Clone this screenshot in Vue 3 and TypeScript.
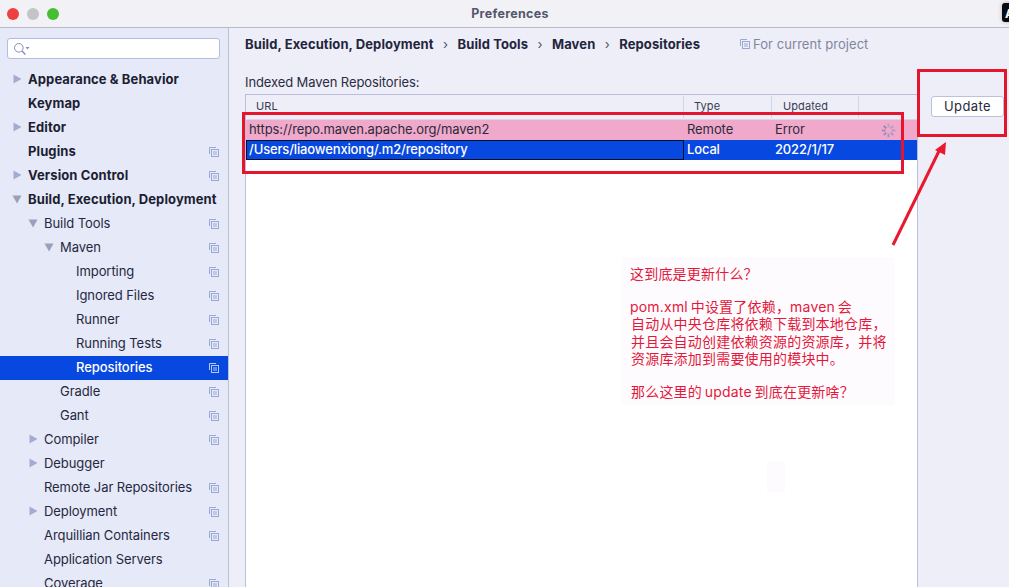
<script setup lang="ts">
interface TreeRow {
  label: string
  level: number
  bold?: boolean
  arrow?: 'right' | 'down'
  copy?: boolean
  active?: boolean
}

const rows: TreeRow[] = [
  { label: 'Appearance & Behavior', level: 0, bold: true, arrow: 'right' },
  { label: 'Keymap', level: 0, bold: true },
  { label: 'Editor', level: 0, bold: true, arrow: 'right' },
  { label: 'Plugins', level: 0, bold: true, copy: true },
  { label: 'Version Control', level: 0, bold: true, arrow: 'right', copy: true },
  { label: 'Build, Execution, Deployment', level: 0, bold: true, arrow: 'down' },
  { label: 'Build Tools', level: 1, arrow: 'down', copy: true },
  { label: 'Maven', level: 2, arrow: 'down', copy: true },
  { label: 'Importing', level: 3, copy: true },
  { label: 'Ignored Files', level: 3, copy: true },
  { label: 'Runner', level: 3, copy: true },
  { label: 'Running Tests', level: 3, copy: true },
  { label: 'Repositories', level: 3, copy: true, active: true },
  { label: 'Gradle', level: 2, copy: true },
  { label: 'Gant', level: 2, copy: true },
  { label: 'Compiler', level: 1, arrow: 'right', copy: true },
  { label: 'Debugger', level: 1, arrow: 'right' },
  { label: 'Remote Jar Repositories', level: 1, copy: true },
  { label: 'Deployment', level: 1, arrow: 'right', copy: true },
  { label: 'Arquillian Containers', level: 1, copy: true },
  { label: 'Application Servers', level: 1 },
  { label: 'Coverage', level: 1, copy: true },
]

const crumbs = ['Build, Execution, Deployment', 'Build Tools', 'Maven', 'Repositories']
const spokes = [0, 45, 90, 135, 180, 225, 270, 315]
const indent = (level: number) => `${28 + level * 16}px`
</script>

<template>
  <div class="window">
    <header class="titlebar">
      <div class="lights">
        <span class="light red"></span>
        <span class="light gray"></span>
        <span class="light green"></span>
      </div>
      <span class="title">Preferences</span>
      <span class="corner-mark">A</span>
    </header>

    <div class="body">
      <aside class="sidebar">
        <div class="search">
          <svg width="17" height="14" viewBox="0 0 17 14" fill="none">
            <circle cx="5.8" cy="5.8" r="4.3" stroke="#7f8fbf" stroke-width="1" />
            <path d="M9 9l3.4 3.6" stroke="#7f8fbf" stroke-width="1.4" />
            <path d="M12.5 5h4l-2 2.4z" fill="#7f8fbf" />
          </svg>
        </div>
        <ul class="tree">
          <li
            v-for="row in rows"
            :key="row.label"
            class="row"
            :class="{ bold: row.bold, active: row.active }"
            :style="{ paddingLeft: indent(row.level) }"
          >
            <svg
              v-if="row.arrow"
              class="arrow"
              :style="{ left: `${12 + row.level * 16}px` }"
              width="10"
              height="10"
              viewBox="0 0 10 10"
            >
              <path v-if="row.arrow === 'right'" d="M1.5 0.5L9.5 5L1.5 9.5z" fill="#a3acd0" />
              <path v-else d="M0.5 1.5H9.5L5 9.5z" fill="#9a9fbc" />
            </svg>
            <span class="label">{{ row.label }}</span>
            <svg v-if="row.copy" class="copy" width="10" height="10" viewBox="0 0 10 10" fill="none">
              <path d="M7 .5H.5V7" stroke="currentColor" />
              <rect x="2.5" y="2.5" width="7" height="7" stroke="currentColor" />
              <path d="M4 5h4M4 7h4" stroke="currentColor" />
            </svg>
          </li>
        </ul>
      </aside>

      <main class="content">
        <nav class="crumbs">
          <template v-for="(c, i) in crumbs" :key="c">
            <span v-if="i" class="sep">›</span>
            <span class="crumb">{{ c }}</span>
          </template>
          <span class="scope">
            <svg width="10" height="10" viewBox="0 0 10 10" fill="none">
              <path d="M7 .5H.5V7" stroke="#9aa8d0" />
              <rect x="2.5" y="2.5" width="7" height="7" stroke="#9aa8d0" />
              <path d="M4 5h4M4 7h4" stroke="#9aa8d0" />
            </svg>
            For current project
          </span>
        </nav>

        <div class="panel-label">Indexed Maven Repositories:</div>
        <div class="panel">
          <section class="table">
            <div class="thead">
              <span class="th url">URL</span>
              <span class="th type">Type</span>
              <span class="th upd">Updated</span>
              <span class="th end"></span>
            </div>
            <div class="tr error">
              <span class="td url">https://repo.maven.apache.org/maven2</span>
              <span class="td type">Remote</span>
              <span class="td upd">Error</span>
              <span class="td end">
                <svg width="15" height="15" viewBox="0 0 15 15">
                  <line
                    v-for="(s, i) in spokes"
                    :key="s"
                    x1="7.5"
                    y1="0.8"
                    x2="7.5"
                    y2="4.4"
                    stroke="#8089bf"
                    stroke-width="1.8"
                    :opacity="0.4 + i * 0.08"
                    :transform="`rotate(${s} 7.5 7.5)`"
                  />
                </svg>
              </span>
            </div>
            <div class="tr selected">
              <span class="td url focus">/Users/liaowenxiong/.m2/repository</span>
              <span class="td type">Local</span>
              <span class="td upd">2022/1/17</span>
              <span class="td end"></span>
            </div>
          </section>
          <div class="actions">
            <button class="btn" type="button">Update</button>
          </div>
        </div>
      </main>
    </div>

    <div class="mark mark-rows"></div>
    <div class="mark mark-btn"></div>
    <svg class="pointer" width="70" height="115" viewBox="0 0 70 115">
      <path d="M3 111L50 15" stroke="#e8182f" stroke-width="3" fill="none" />
      <path d="M56 8L45 16L55 21z" fill="#e8182f" />
    </svg>
    <div class="note">
      <p class="n1">这到底是更新什么？</p>
      <p class="n2">pom.xml&#8201;中设置了依赖，maven&#8201;会</p>
      <p class="n3">自动从中央仓库将依赖下载到本地仓库，</p>
      <p class="n3">并且会自动创建依赖资源的资源库，并将</p>
      <p class="n3">资源库添加到需要使用的模块中。</p>
      <p class="n4">那么这里的&#8201;update&#8201;到底在更新啥？</p>
    </div>
    <div class="ghost"></div>
  </div>
</template>

<style>
html, body { margin: 0; overflow: hidden; }
</style>

<style scoped>
.window {
  position: relative;
  width: 1009px;
  height: 587px;
  overflow: hidden;
  display: flex;
  flex-direction: column;
  font-family: Inter, "Noto Sans CJK SC", sans-serif;
  font-size: 13px;
  color: #20223a;
  background: #eeeef8;
}
.titlebar {
  height: 28px;
  flex: none;
  box-sizing: border-box;
  border-bottom: 1px solid #b6bacb;
  background: #f2f2f6;
  display: flex;
  align-items: center;
  justify-content: center;
  padding-left: 11px;
  position: relative;
}
.lights { position: absolute; left: 7px; top: 8px; display: flex; gap: 8px; }
.light { width: 12px; height: 12px; border-radius: 50%; }
.red { background: #ee4040; }
.gray { background: #c2c5c6; }
.green { background: #46bd32; }
.title { font-weight: 700; font-size: 12.5px; color: #54576b; letter-spacing: .3px; }
.corner-mark {
  position: absolute; left: 1002px; top: 3px; width: 12px; height: 19px;
  box-sizing: border-box; padding-left: 3px;
  border-radius: 3px; background: #0a0a0e; box-shadow: 0 0 4px rgba(60, 60, 80, .35);
  color: #fff; font-size: 12px; font-weight: 700; line-height: 21px;
}
.body { flex: 1; display: flex; min-height: 0; }
.sidebar {
  width: 229px;
  flex: none;
  box-sizing: border-box;
  border-right: 1px solid #b9c0de;
  background: #e6e9f7;
  padding-top: 10px;
}
.search {
  box-sizing: border-box;
  width: 213px;
  height: 21px;
  margin-left: 7px;
  margin-bottom: 9px;
  padding: 3px 0 0 5px;
  background: #fff;
  border: 1px solid #b4bce0;
  border-radius: 3px;
}
.search svg { display: block; }
.tree { list-style: none; margin: 0; padding: 0; }
.row {
  position: relative;
  height: 24px;
  line-height: 22px;
  white-space: nowrap;
  letter-spacing: -.07px;
  color: #252840;
}
.row.bold { font-weight: 700; letter-spacing: .1px; color: #1c1e33; }
.row.active { background: #0748e0; color: #fff; font-weight: 500; }
.arrow { position: absolute; top: 6px; }
.copy { position: absolute; left: 209px; top: 7px; color: #9aa8d4; }
.row.active .copy { color: #b9c9f2; }
.content { flex: 1; min-width: 0; padding: 0 5px 0 16px; display: flex; flex-direction: column; }
.crumbs {
  height: 32px;
  display: flex;
  align-items: center;
  font-weight: 700;
  letter-spacing: .1px;
  color: #23253c;
}
.crumb { white-space: nowrap; }
.sep { margin: 0 9.4px; font-weight: 400; color: #50536a; }
.scope {
  margin-left: 40px;
  display: flex;
  align-items: center;
  gap: 3px;
  font-weight: 400;
  color: #81859f;
  letter-spacing: .05px;
}
.panel-label { margin-top: 14px; height: 20px; line-height: 16px; letter-spacing: -.1px; color: #2a2c42; }
.panel { flex: 1; display: flex; min-height: 0; }
.table {
  width: 673px;
  flex: none;
  box-sizing: border-box;
  border: 1px solid #b9bedb;
  border-bottom: 0;
  background: #fff;
}
.thead {
  height: 24px;
  display: flex;
  background: #eeeef8;
  border-bottom: 1px solid #d6d8ea;
  font-size: 11px;
  letter-spacing: .1px;
  color: #3a3c52;
}
.th { box-sizing: border-box; height: 22px; line-height: 20px; border-right: 1px solid #d3d6e8; margin-top: 1px; }
.tr { height: 20px; display: flex; line-height: 19px; letter-spacing: -.08px; white-space: nowrap; }
.url { width: 438px; flex: none; box-sizing: border-box; padding-left: 3px; }
.th.url { padding-left: 10px; }
.type { width: 88px; flex: none; box-sizing: border-box; padding-left: 3px; }
.th.type { padding-left: 10px; }
.upd { width: 87px; flex: none; box-sizing: border-box; padding-left: 3px; }
.th.upd { padding-left: 11px; }
.end { flex: 1; }
.th.end { border-right: 0; }
.td.end { display: flex; align-items: center; justify-content: flex-end; padding-right: 21px; }
.error { background: #f0a9ca; color: #2c2b3c; }
.selected { background: #0748e0; color: #fff; font-weight: 500; letter-spacing: -.15px; }
.focus { outline: 1px solid #05102e; outline-offset: -1px; }
.actions { flex: 1; padding: 2px 0 0 13px; }
.btn {
  box-sizing: border-box;
  width: 73px;
  height: 21px;
  padding: 0 0 1px;
  font: inherit;
  letter-spacing: .4px;
  color: #26283c;
  background: #fff;
  border: 1px solid #bcc1dc;
  border-radius: 3px;
}
.mark { position: absolute; box-sizing: border-box; border: 3px solid #e4152d; }
.mark-rows { left: 242px; top: 112px; width: 662px; height: 62px; }
.mark-btn { left: 917px; top: 69px; width: 90px; height: 68px; }
.pointer { position: absolute; left: 890px; top: 134px; }
.note {
  position: absolute;
  left: 622px;
  top: 257px;
  width: 273px;
  height: 148px;
  background: #fefbfe;
  color: #e4183a;
  font-size: 14px;
  letter-spacing: .2px;
  line-height: 17.6px;
  white-space: nowrap;
}
.note p { margin: 0; }
.n1 { position: absolute; left: 8px; top: 8px; }
.n2 { position: absolute; left: 8px; top: 41px; }
.n3 { margin-left: 9px !important; }
.n3:nth-child(3) { margin-top: 58px !important; }
.n4 { position: absolute; left: 9px; top: 126px; }
.ghost { position: absolute; left: 767px; top: 462px; width: 18px; height: 30px; background: #fefbfe; }
</style>
